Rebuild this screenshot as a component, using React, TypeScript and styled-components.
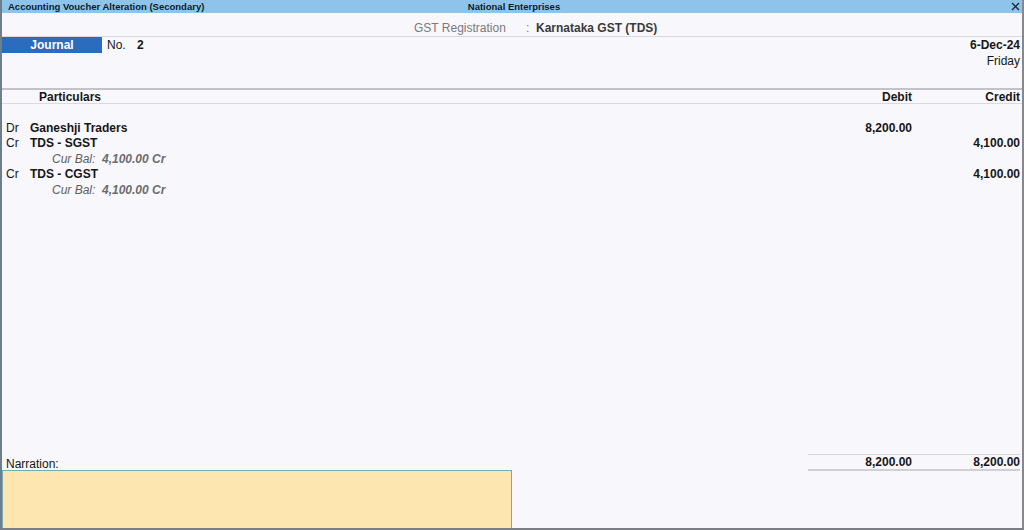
import React from "react"
import styled, { createGlobalStyle } from "styled-components"

type Entry = {
  side: "Dr" | "Cr"
  ledger: string
  debit?: string
  credit?: string
  curBal?: string
}

const entries: Entry[] = [
  { side: "Dr", ledger: "Ganeshji Traders", debit: "8,200.00" },
  { side: "Cr", ledger: "TDS - SGST", credit: "4,100.00", curBal: "4,100.00 Cr" },
  { side: "Cr", ledger: "TDS - CGST", credit: "4,100.00", curBal: "4,100.00 Cr" },
]

const GlobalStyle = createGlobalStyle`
  html, body {
    margin: 0;
    padding: 0;
    background: #f8f7fc;
  }
  * {
    box-sizing: border-box;
  }
`

export default function App() {
  return (
    <>
      <GlobalStyle />
      <Frame>
        <TitleBar>
          <span>Accounting Voucher Alteration (Secondary)</span>
          <span>National Enterprises</span>
          <CloseButton>
            <svg width="9" height="9" viewBox="0 0 9 9">
              <path d="M1 1 L8 8 M8 1 L1 8" stroke="#1c2a38" strokeWidth="1.4" />
            </svg>
          </CloseButton>
        </TitleBar>

        <GstRow>
          <GstLabel>GST Registration</GstLabel>
          <GstColon>:</GstColon>
          <GstValue>Karnataka GST (TDS)</GstValue>
        </GstRow>

        <VoucherRow>
          <VoucherLeft>
            <VoucherType>Journal</VoucherType>
            <NoLabel>No.</NoLabel>
            <NoValue>2</NoValue>
          </VoucherLeft>
          <DateBlock>
            <DateText>6-Dec-24</DateText>
            <DayText>Friday</DayText>
          </DateBlock>
        </VoucherRow>

        <HeaderRow>
          <HeadParticulars>Particulars</HeadParticulars>
          <HeadAmount>Debit</HeadAmount>
          <HeadAmount>Credit</HeadAmount>
        </HeaderRow>

        <Body>
          {entries.map((e) => (
            <React.Fragment key={e.ledger}>
              <EntryRow>
                <Side>{e.side}</Side>
                <Ledger>{e.ledger}</Ledger>
                <Amount>{e.debit ?? ""}</Amount>
                <Amount>{e.credit ?? ""}</Amount>
              </EntryRow>
              {e.curBal && (
                <BalRow>
                  <BalLabel>Cur Bal:</BalLabel>
                  <BalValue>{e.curBal}</BalValue>
                </BalRow>
              )}
            </React.Fragment>
          ))}
        </Body>

        <TotalsRow>
          <NarrationLabel>Narration:</NarrationLabel>
          <TotalCell>8,200.00</TotalCell>
          <TotalCell>8,200.00</TotalCell>
        </TotalsRow>
        <NarrationRow>
          <NarrationBox />
        </NarrationRow>
      </Frame>
    </>
  )
}

const Frame = styled.div`
  width: 1024px;
  height: 530px;
  display: flex;
  flex-direction: column;
  background: #f8f7fc;
  border-left: 2px solid #6d7e8c;
  border-right: 2px solid #85898f;
  border-bottom: 2px solid #7b7f85;
  font-family: "Liberation Sans", Arial, sans-serif;
  font-size: 12px;
  color: #161616;
  overflow: hidden;
`

const TitleBar = styled.div`
  height: 13px;
  flex: none;
  display: grid;
  grid-template-columns: 1fr auto 1fr;
  align-items: center;
  padding: 0 2px 0 6px;
  background: #8fc4ea;
  font-size: 9.5px;
  font-weight: bold;
  color: #0f1a26;
  line-height: 13px;
`

const CloseButton = styled.span`
  justify-self: end;
  display: flex;
  align-items: center;
`

const GstRow = styled.div`
  height: 24px;
  flex: none;
  display: flex;
  align-items: center;
  padding: 7px 0 0 412px;
  border-bottom: 1px solid #d9d9df;
`

const GstLabel = styled.span`
  width: 112px;
  color: #7a7a7a;
`

const GstColon = styled.span`
  width: 10px;
  color: #7a7a7a;
`

const GstValue = styled.span`
  font-weight: bold;
  color: #3a3a3a;
`

const VoucherRow = styled.div`
  height: 51px;
  flex: none;
  display: flex;
  justify-content: space-between;
  align-items: flex-start;
  padding-right: 2px;
`

const VoucherLeft = styled.div`
  display: flex;
  align-items: center;
  height: 16px;
`

const VoucherType = styled.div`
  width: 100px;
  height: 16px;
  line-height: 16px;
  text-align: center;
  background: #2b6cbf;
  color: #ffffff;
  font-weight: bold;
`

const NoLabel = styled.span`
  margin-left: 5px;
  width: 30px;
`

const NoValue = styled.span`
  font-weight: bold;
`

const DateBlock = styled.div`
  display: flex;
  flex-direction: column;
  align-items: flex-end;
  line-height: 16px;
`

const DateText = styled.span`
  font-weight: bold;
`

const DayText = styled.span``

const HeaderRow = styled.div`
  height: 16px;
  flex: none;
  display: grid;
  grid-template-columns: 1fr 104px 108px;
  align-items: center;
  padding-right: 2px;
  border-top: 2px solid #c2c2c8;
  border-bottom: 1px solid #d9d9df;
  font-weight: bold;
`

const HeadParticulars = styled.span`
  padding-left: 37px;
`

const HeadAmount = styled.span`
  text-align: right;
`

const Body = styled.div`
  flex: 1;
  padding-top: 16px;
  display: flex;
  flex-direction: column;
`

const EntryRow = styled.div`
  height: 15.5px;
  display: grid;
  grid-template-columns: 24px 1fr 104px 108px;
  align-items: center;
  padding: 0 2px 0 4px;
`

const Side = styled.span``

const Ledger = styled.span`
  font-weight: bold;
`

const Amount = styled.span`
  text-align: right;
  font-weight: bold;
`

const BalRow = styled.div`
  height: 15.5px;
  display: flex;
  align-items: center;
  padding-left: 50px;
  font-style: italic;
  color: #5e5e5e;
`

const BalLabel = styled.span`
  width: 50px;
`

const BalValue = styled.span`
  font-weight: bold;
  color: #6c6c6c;
`

const TotalsRow = styled.div`
  height: 16px;
  flex: none;
  display: grid;
  grid-template-columns: 1fr 104px 108px;
  align-items: stretch;
  padding: 0 2px 0 4px;
`

const NarrationLabel = styled.span`
  display: flex;
  align-items: center;
  padding-top: 2px;
`

const TotalCell = styled.span`
  display: flex;
  align-items: center;
  justify-content: flex-end;
  font-weight: bold;
  border-top: 1px solid #d4d4da;
  border-bottom: 2px solid #cfcfd5;
`

const NarrationRow = styled.div`
  height: 58px;
  flex: none;
  display: flex;
`

const NarrationBox = styled.div`
  width: 510px;
  background: #fde6b0;
  border: 1px solid #76acae;
  border-bottom: none;
`
